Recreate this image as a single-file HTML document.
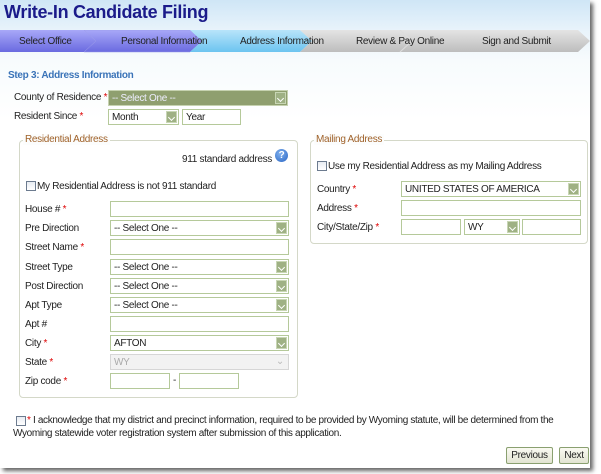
<!DOCTYPE html>
<html><head><meta charset="utf-8"><style>
*{box-sizing:border-box;margin:0;padding:0}
body{width:601px;height:474px;overflow:hidden;background:#fff;font-family:"Liberation Sans",sans-serif;font-size:10px;color:#222;position:relative;letter-spacing:-0.3px}
.page{position:absolute;left:0;top:0;width:590px;height:468px;background:linear-gradient(#cfe6f6 0,#e8f3fb 30px,#f7fbfd 60px,#fff 120px);box-shadow:3px 3px 4px #666}
.a{position:absolute;white-space:nowrap}
.r{color:#d00}
.inp{position:absolute;height:16px;border:1px solid #b5c99a;background:#fff;font-size:10px;padding:1px 3px;line-height:13px}
.sel .dd{position:absolute;right:1px;top:1px;width:11px;height:12px;background:#9fb184;border:1px solid #c8d6b4}
.sel .dd:after{content:"";position:absolute;left:2px;top:3px;width:4px;height:4px;border-right:1.5px solid #fff;border-bottom:1.5px solid #fff;transform:rotate(45deg)}
.fs{position:absolute;border:1px solid #d4d8c8;border-radius:4px}
.lg{position:absolute;background:#fcfdfd;color:#a0622a;padding:0 2px;font-size:10px}
.cb{position:absolute;width:10px;height:10px;border:1px solid #6c7b8f;background:linear-gradient(#e8ecf2,#fff)}
.btn{position:absolute;height:17px;border:1px solid #8aa070;border-radius:2px;background:linear-gradient(#fafaf2,#e2e4d2);font-size:10px;text-align:center;line-height:15px}
</style></head><body>
<div class="page">
<div class="a" style="left:4px;top:2px;font-size:18px;font-weight:bold;color:#1b1b8a;letter-spacing:-0.3px">Write-In Candidate Filing</div>
<svg class="a" style="left:0;top:30px" width="590" height="23">
<defs>
<linearGradient id="p" x1="0" y1="0" x2="0" y2="1"><stop offset="0" stop-color="#a8a8f8"/><stop offset="1" stop-color="#6a6ae0"/></linearGradient>
<linearGradient id="b" x1="0" y1="0" x2="0" y2="1"><stop offset="0" stop-color="#b8e4fa"/><stop offset="1" stop-color="#6cc4f0"/></linearGradient>
<linearGradient id="g" x1="0" y1="0" x2="0" y2="1"><stop offset="0" stop-color="#e4e4e4"/><stop offset="1" stop-color="#bdbdbd"/></linearGradient>
</defs>
<polygon points="0,0 84,0 96,11 84,22 0,22" fill="url(#p)"/>
<polygon points="84,0 190,0 202,11 190,22 84,22 96,11" fill="url(#p)" stroke="#9a9ae8" stroke-width="0.5"/>
<polygon points="190,0 300,0 312,11 300,22 190,22 202,11" fill="url(#b)"/>
<polygon points="300,0 400,0 412,11 400,22 300,22 312,11" fill="url(#g)"/>
<polygon points="400,0 578,0 590,11 578,22 400,22 412,11" fill="url(#g)"/>
<line x1="400" y1="0" x2="412" y2="11" stroke="#ddd"/><line x1="412" y1="11" x2="400" y2="22" stroke="#ddd"/>
</svg>
<div class="a" style="left:19px;top:36px">Select Office</div>
<div class="a" style="left:121px;top:36px">Personal Information</div>
<div class="a" style="left:240px;top:36px">Address Information</div>
<div class="a" style="left:356px;top:36px">Review &amp; Pay Online</div>
<div class="a" style="left:482px;top:36px">Sign and Submit</div>

<div class="a" style="left:8px;top:70px;color:#3a73b8;font-weight:bold">Step 3: Address Information</div>
<div class="a" style="left:14px;top:92px">County of Residence <span class="r">*</span></div>
<div class="inp sel" style="left:108px;top:90px;width:180px;background:#8f9f6f;color:#eef;border-color:#c6d2b0">-- Select One --<span class="dd"></span></div>
<div class="a" style="left:14px;top:111px">Resident Since <span class="r">*</span></div>
<div class="inp sel" style="left:108px;top:109px;width:71px">Month<span class="dd"></span></div>
<div class="inp" style="left:182px;top:109px;width:59px">Year</div>

<div class="fs" style="left:19px;top:140px;width:279px;height:258px"></div>
<div class="lg" style="left:23px;top:134px">Residential Address</div>
<div class="a" style="left:182px;top:154px">911 standard address</div>
<div class="a" style="left:275px;top:149px;width:13px;height:13px;border-radius:50%;background:radial-gradient(circle at 40% 35%,#7fb0ee,#2a66c4);color:#fff;font-weight:bold;font-size:10px;text-align:center;line-height:13px">?</div>
<div class="cb" style="left:26px;top:181px"></div>
<div class="a" style="left:37px;top:181px">My Residential Address is not 911 standard</div>

<div class="a" style="left:25px;top:204px">House # <span class="r">*</span></div>
<div class="inp" style="left:110px;top:201px;width:179px"></div>
<div class="a" style="left:25px;top:223px">Pre Direction</div>
<div class="inp sel" style="left:110px;top:220px;width:179px">-- Select One --<span class="dd"></span></div>
<div class="a" style="left:25px;top:242px">Street Name <span class="r">*</span></div>
<div class="inp" style="left:110px;top:239px;width:179px"></div>
<div class="a" style="left:25px;top:262px">Street Type</div>
<div class="inp sel" style="left:110px;top:259px;width:179px">-- Select One --<span class="dd"></span></div>
<div class="a" style="left:25px;top:281px">Post Direction</div>
<div class="inp sel" style="left:110px;top:278px;width:179px">-- Select One --<span class="dd"></span></div>
<div class="a" style="left:25px;top:300px">Apt Type</div>
<div class="inp sel" style="left:110px;top:297px;width:179px">-- Select One --<span class="dd"></span></div>
<div class="a" style="left:25px;top:319px">Apt #</div>
<div class="inp" style="left:110px;top:316px;width:179px"></div>
<div class="a" style="left:25px;top:338px">City <span class="r">*</span></div>
<div class="inp sel" style="left:110px;top:335px;width:179px">AFTON<span class="dd"></span></div>
<div class="a" style="left:25px;top:357px">State <span class="r">*</span></div>
<div class="inp" style="left:110px;top:354px;width:179px;background:#f2f2f2;border-color:#d6d6d6;color:#aaa">WY<span class="a" style="right:4px;top:0;color:#bbb">&#8964;</span></div>
<div class="a" style="left:25px;top:376px">Zip code <span class="r">*</span></div>
<div class="inp" style="left:110px;top:373px;width:60px"></div>
<div class="a" style="left:173px;top:375px">-</div>
<div class="inp" style="left:179px;top:373px;width:60px"></div>

<div class="fs" style="left:310px;top:140px;width:278px;height:104px"></div>
<div class="lg" style="left:314px;top:134px">Mailing Address</div>
<div class="cb" style="left:317px;top:161px"></div>
<div class="a" style="left:328px;top:161px">Use my Residential Address as my Mailing Address</div>
<div class="a" style="left:317px;top:184px">Country <span class="r">*</span></div>
<div class="inp sel" style="left:401px;top:181px;width:180px">UNITED STATES OF AMERICA<span class="dd"></span></div>
<div class="a" style="left:317px;top:203px">Address <span class="r">*</span></div>
<div class="inp" style="left:401px;top:200px;width:180px"></div>
<div class="a" style="left:317px;top:222px">City/State/Zip <span class="r">*</span></div>
<div class="inp" style="left:401px;top:219px;width:60px"></div>
<div class="inp sel" style="left:464px;top:219px;width:56px">WY<span class="dd"></span></div>
<div class="inp" style="left:522px;top:219px;width:59px"></div>

<div class="cb" style="left:16px;top:416px"></div>
<div class="a" style="left:27px;top:415px;letter-spacing:-0.35px"><span class="r">*</span> I acknowledge that my district and precinct information, required to be provided by Wyoming statute, will be determined from the</div>
<div class="a" style="left:13px;top:428px;letter-spacing:-0.35px">Wyoming statewide voter registration system after submission of this application.</div>
<div class="btn" style="left:506px;top:447px;width:47px">Previous</div>
<div class="btn" style="left:559px;top:447px;width:30px">Next</div>
</div>
</body></html>
